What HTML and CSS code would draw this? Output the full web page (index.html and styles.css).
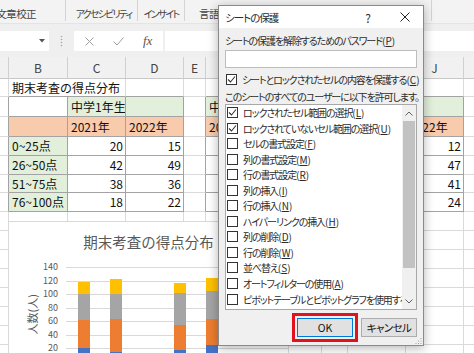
FILE: index.html
```html
<!DOCTYPE html>
<html lang="ja">
<head>
    <meta charset="UTF-8">
    <meta name="viewport" content="width=device-width, initial-scale=1.0">
    <title>シートの保護</title>
    <link rel="stylesheet" href="styles.css">
</head>
<body>

    <div class="ribbon">
        <div class="group g1"><span>文章校正</span></div>
        <div class="group g2"><span>アクセシビリティ</span></div>
        <div class="group g3"><span>インサイト</span></div>
        <div class="group g4"><span>言語</span></div>
        <div class="group g5"></div>
    </div>

    <div class="fbar">
        <div class="namebox">
            <svg width="6" height="4" viewBox="0 0 6 4"><polygon points="0,0 6,0 3,3.5" fill="#555"/></svg>
        </div>
        <div class="grip">
            <svg width="3" height="13" viewBox="0 0 3 13"><circle cx="1.5" cy="1.5" r="0.8" fill="#a8a8a8"/><circle cx="1.5" cy="4.5" r="0.8" fill="#a8a8a8"/><circle cx="1.5" cy="7.5" r="0.8" fill="#a8a8a8"/><circle cx="1.5" cy="10.5" r="0.8" fill="#a8a8a8"/></svg>
        </div>
        <div class="fbtns">
            <svg class="fx-cancel" width="9" height="9" viewBox="0 0 9 9"><path d="M0.5 0.5L8.5 8.5M8.5 0.5L0.5 8.5" stroke="#9c9c9c" stroke-width="1"/></svg>
            <svg class="fx-enter" width="11" height="9" viewBox="0 0 11 9"><path d="M0.5 4.5L4 8L10.5 0.5" stroke="#9c9c9c" stroke-width="1" fill="none"/></svg>
            <span class="fx">fx</span>
        </div>
        <div class="finput"></div>
    </div>

    <div class="sheet">
        <div class="row hd">
            <div>A</div><div>B</div><div>C</div><div>D</div><div>E</div><div>F</div><div>G</div><div>H</div><div>I</div><div>J</div><div>K</div>
        </div>
        <div class="row r1">
            <div></div><div class="tt wide">期末考査の得点分布</div><div class="tt"></div><div></div><div class="tt"></div><div class="tt"></div><div></div><div class="tt"></div><div class="tt"></div><div></div>
        </div>
        <div class="row r2">
            <div class="tl"></div><div class="t"></div><div class="t g">中学1年生</div><div class="t g"></div><div class="tl"></div><div class="t g">中学2年生</div><div class="t g"></div><div class="tl"></div><div class="t g">中学3年生</div><div class="t g"></div><div></div>
        </div>
        <div class="row r3">
            <div class="tl"></div><div class="t o"></div><div class="t o">2021年</div><div class="t o">2022年</div><div class="tl"></div><div class="t o">2021年</div><div class="t o">2022年</div><div class="tl"></div><div class="t o">2021年</div><div class="t o">2022年</div><div></div>
        </div>
        <div class="row r4">
            <div class="tl"></div><div class="t g">0~25点</div><div class="t n">20</div><div class="t n">15</div><div class="tl"></div><div class="t n">18</div><div class="t n">25</div><div class="tl"></div><div class="t n">16</div><div class="t n">12</div><div></div>
        </div>
        <div class="row r5">
            <div class="tl"></div><div class="t g">26~50点</div><div class="t n">42</div><div class="t n">49</div><div class="tl"></div><div class="t n">36</div><div class="t n">39</div><div class="tl"></div><div class="t n">44</div><div class="t n">47</div><div></div>
        </div>
        <div class="row r6">
            <div class="tl"></div><div class="t g">51~75点</div><div class="t n">38</div><div class="t n">36</div><div class="tl"></div><div class="t n">48</div><div class="t n">40</div><div class="tl"></div><div class="t n">39</div><div class="t n">41</div><div></div>
        </div>
        <div class="row r7">
            <div class="tl"></div><div class="t g">76~100点</div><div class="t n">18</div><div class="t n">22</div><div class="tl"></div><div class="t n">15</div><div class="t n">20</div><div class="tl"></div><div class="t n">21</div><div class="t n">24</div><div></div>
        </div>
        <div class="row"><div></div><div></div><div></div><div></div><div></div><div></div><div></div><div></div><div></div><div></div><div></div></div>
        <div class="row"><div></div><div></div><div></div><div></div><div></div><div></div><div></div><div></div><div></div><div></div><div></div></div>
        <div class="row"><div></div><div></div><div></div><div></div><div></div><div></div><div></div><div></div><div></div><div></div><div></div></div>
        <div class="row"><div></div><div></div><div></div><div></div><div></div><div></div><div></div><div></div><div></div><div></div><div></div></div>
        <div class="row"><div></div><div></div><div></div><div></div><div></div><div></div><div></div><div></div><div></div><div></div><div></div></div>
        <div class="row"><div></div><div></div><div></div><div></div><div></div><div></div><div></div><div></div><div></div><div></div><div></div></div>
        <div class="row"><div></div><div></div><div></div><div></div><div></div><div></div><div></div><div></div><div></div><div></div><div></div></div>
        <div class="row"><div></div><div></div><div></div><div></div><div></div><div></div><div></div><div></div><div></div><div></div><div></div></div>
    </div>

    <!-- グラフ -->
    <div class="chart">
        <div class="ctitle">期末考査の得点分布</div>
        <div class="cbody">
            <div class="atitle"><span>人数(人)</span></div>
            <div class="area">
                <div class="scale">
                    <div class="tick"><span>140</span></div>
                    <div class="tick"><span>120</span></div>
                    <div class="tick"><span>100</span></div>
                    <div class="tick"><span>80</span></div>
                    <div class="tick"><span>60</span></div>
                    <div class="tick"><span>40</span></div>
                    <div class="tick"><span>20</span></div>
                    <div class="tick"><span>0</span></div>
                </div>
                <div class="bars">
                    <div class="cat"><div class="bar"><i class="s1" style="height:13.57px"></i><i class="s2" style="height:28.5px"></i><i class="s3" style="height:25.79px"></i><i class="s4" style="height:12.21px"></i></div></div>
                    <div class="cat"><div class="bar"><i class="s1" style="height:10.18px"></i><i class="s2" style="height:33.25px"></i><i class="s3" style="height:24.43px"></i><i class="s4" style="height:14.93px"></i></div></div>
                    <div class="cat"></div>
                    <div class="cat"><div class="bar"><i class="s1" style="height:12.21px"></i><i class="s2" style="height:24.43px"></i><i class="s3" style="height:32.57px"></i><i class="s4" style="height:10.18px"></i></div></div>
                    <div class="cat"><div class="bar"><i class="s1" style="height:16.96px"></i><i class="s2" style="height:26.46px"></i><i class="s3" style="height:27.14px"></i><i class="s4" style="height:13.57px"></i></div></div>
                </div>
            </div>
        </div>
    </div>

    <!-- シートの保護ダイアログ -->
    <div class="dialog">
        <div class="dtitle">
            <span class="dname">シートの保護</span>
            <span class="help">?</span>
            <span class="close"><svg width="10" height="10" viewBox="0 0 10 10"><path d="M0.5 0.5L9.5 9.5M9.5 0.5L0.5 9.5" stroke="#222" stroke-width="1"/></svg></span>
        </div>
        <div class="dbody">
            <p class="lbl">シートの保護を解除するためのパスワード<span class="ak">(<u>P</u>)</span></p>
            <div class="pwd"></div>
            <div class="chk"><span class="cb"><svg width="9" height="9" viewBox="0 0 9 9"><path d="M1 4.5L3.5 7L8 1.5" stroke="#333" stroke-width="1.1" fill="none"/></svg></span>シートとロックされたセルの内容を保護する<span class="ak">(<u>C</u>)</span></div>
            <p class="lbl note">このシートのすべてのユーザーに以下を許可します。</p>
            <div class="list">
                <ul class="items">
                    <li><span class="cb"><svg width="9" height="9" viewBox="0 0 9 9"><path d="M1 4.5L3.5 7L8 1.5" stroke="#333" stroke-width="1.1" fill="none"/></svg></span>ロックされたセル範囲の選択<span class="ak">(<u>L</u>)</span></li>
                    <li><span class="cb"><svg width="9" height="9" viewBox="0 0 9 9"><path d="M1 4.5L3.5 7L8 1.5" stroke="#333" stroke-width="1.1" fill="none"/></svg></span>ロックされていないセル範囲の選択<span class="ak">(<u>U</u>)</span></li>
                    <li><span class="cb"></span>セルの書式設定<span class="ak">(<u>F</u>)</span></li>
                    <li><span class="cb"></span>列の書式設定<span class="ak">(<u>M</u>)</span></li>
                    <li><span class="cb"></span>行の書式設定<span class="ak">(<u>R</u>)</span></li>
                    <li><span class="cb"></span>列の挿入<span class="ak">(<u>I</u>)</span></li>
                    <li><span class="cb"></span>行の挿入<span class="ak">(<u>N</u>)</span></li>
                    <li><span class="cb"></span>ハイパーリンクの挿入<span class="ak">(<u>H</u>)</span></li>
                    <li><span class="cb"></span>列の削除<span class="ak">(<u>D</u>)</span></li>
                    <li><span class="cb"></span>行の削除<span class="ak">(<u>W</u>)</span></li>
                    <li><span class="cb"></span>並べ替え<span class="ak">(<u>S</u>)</span></li>
                    <li><span class="cb"></span>オートフィルターの使用<span class="ak">(<u>A</u>)</span></li>
                    <li class="multi"><span class="cb"></span><span>ピボットテーブルとピボットグラフを使用する<br><span class="ak">(<u>P</u>)</span></span></li>
                </ul>
                <div class="vscroll">
                    <div class="arrow"><svg width="8" height="5" viewBox="0 0 8 5"><path d="M0.5 4.5L4 1L7.5 4.5" stroke="#606060" fill="none"/></svg></div>
                    <div class="thumb"></div>
                    <div class="arrow down"><svg width="8" height="5" viewBox="0 0 8 5"><path d="M0.5 0.5L4 4L7.5 0.5" stroke="#606060" fill="none"/></svg></div>
                </div>
            </div>
            <div class="btns">
                <div class="hl"><button class="btn def">OK</button></div>
                <button class="btn">キャンセル</button>
            </div>
        </div>
        <svg class="sizer" width="7" height="7" viewBox="0 0 7 7"><circle cx="6" cy="1.5" r="0.6" fill="#999"/><circle cx="3.5" cy="4" r="0.6" fill="#999"/><circle cx="6" cy="4" r="0.6" fill="#999"/><circle cx="1" cy="6.5" r="0.6" fill="#999"/><circle cx="3.5" cy="6.5" r="0.6" fill="#999"/><circle cx="6" cy="6.5" r="0.6" fill="#999"/></svg>
    </div>

</body>
</html>
```

FILE: styles.css
```css
* {
    margin: 0;
    padding: 0;
    box-sizing: border-box;
}

html, body {
    width: 474px;
    height: 353px;
    overflow: hidden;
}

body {
    font-family: "Noto Sans CJK JP", sans-serif;
    background-color: #fff;
    color: #222;
    position: relative;
}

/* リボン */
.ribbon {
    height: 24px;
    display: flex;
    background-color: #f3f3f3;
    border-bottom: 1px solid #e4e4e4;
    font-size: 10px;
    letter-spacing: -1.8px;
    color: #444;
    font-feature-settings: "palt";
    white-space: nowrap;
}

.group {
    height: 21px;
    padding-top: 7px;
    line-height: 14px;
    border-right: 1px solid #d4d4d4;
    text-align: center;
    flex-shrink: 0;
    overflow: hidden;
}

.g1 { width: 102px; margin-left: -36px; padding-right: 29px; text-align: right; font-size: 10.5px; letter-spacing: -0.6px; }
.g2 { width: 72px; padding-left: 4px; }
.g3 { width: 47px; }
.g4 { width: 247px; text-align: left; padding-left: 14px; font-size: 10.5px; letter-spacing: -0.6px; }
.g5 { width: 60px; border-right: none; }

/* 数式バー */
.fbar {
    height: 33px;
    display: flex;
    align-items: flex-start;
    padding-top: 7px;
    background-color: #efefef;
}

.namebox {
    width: 49px;
    height: 20px;
    background-color: #fff;
    display: flex;
    align-items: center;
    justify-content: flex-end;
    padding-right: 4px;
}

.grip {
    width: 25px;
    height: 20px;
    display: flex;
    align-items: center;
    justify-content: center;
}

.fbtns {
    width: 89px;
    height: 20px;
    background-color: #fff;
    display: flex;
    align-items: center;
    padding-left: 11px;
}

.fx-enter { margin-left: 19px; }

.fx {
    margin-left: 19px;
    font-family: "Liberation Serif", serif;
    font-style: italic;
    font-size: 13px;
    color: #555;
}

.finput {
    flex: 1;
    height: 20px;
    margin-left: 2px;
    background-color: #fff;
}

/* シート */
.sheet {
    margin-left: -41px;
    font-size: 12px;
    color: #111;
}

.row {
    display: grid;
    grid-template-columns: 50px 59px 58px 58px 22px 58px 58px 26px 58px 58px 58px;
    height: 19px;
    line-height: 18px;
    white-space: nowrap;
}

.row > div {
    border-right: 1px solid #dadada;
    border-bottom: 1px solid #dadada;
    padding: 0 3px;
    overflow: hidden;
}

.row.hd {
    height: 22px;
    line-height: 21px;
    background-color: #f1f1f1;
    color: #444;
}

.row.hd > div {
    text-align: center;
    border-right-color: #d0d0d0;
    border-bottom-color: #c8c8c8;
}

.r1 { height: 18px; line-height: 17px; }
.r2, .r3 { height: 20px; line-height: 19px; }
.r6 { height: 18px; line-height: 17px; }

.r1 .wide { grid-column: span 2; overflow: visible; }

.row > .t { border-right-color: #a3a3a3; border-bottom-color: #a3a3a3; }
.row > .tt { border-bottom-color: #a3a3a3; }
.row > .tl { border-right-color: #a3a3a3; }

.row > .g { background-color: #e2efda; }
.row > .o { background-color: #f8cbad; }
.row > .n { text-align: right; padding-right: 2px; }

/* グラフ */
.chart {
    position: absolute;
    left: 8px;
    top: 221px;
    width: 281px;
    height: 150px;
    background-color: #fff;
    border: 1px solid #d9d9d9;
    color: #595959;
}

.ctitle {
    padding-top: 10px;
    line-height: 20px;
    font-size: 14.5px;
    text-align: center;
}

.cbody {
    margin-top: 15px;
    display: flex;
    padding-left: 13px;
}

.atitle {
    width: 20px;
    height: 95px;
    display: flex;
    align-items: center;
    justify-content: center;
    font-size: 11px;
}

.atitle span {
    writing-mode: vertical-rl;
    text-orientation: sideways;
    transform: rotate(180deg);
}

.area {
    flex: 1;
    display: grid;
}

.scale, .bars {
    grid-area: 1 / 1;
}

.tick {
    height: 13.57px;
    display: flex;
    align-items: flex-start;
}

.tick span {
    width: 16px;
    margin-top: -6px;
    line-height: 12px;
    font-size: 9px;
    text-align: right;
    color: #595959;
}

.tick::after {
    content: "";
    flex: 1;
    height: 1px;
    margin-left: 8px;
    background-color: #d9d9d9;
}

.bars {
    height: 95px;
    padding-left: 26px;
    display: flex;
}

.cat {
    width: 32px;
    display: flex;
    justify-content: center;
    align-items: flex-end;
}

.bar {
    width: 12px;
    display: flex;
    flex-direction: column-reverse;
}

.bar i { display: block; }
.s1 { background-color: #4472c4; }
.s2 { background-color: #ed7d31; }
.s3 { background-color: #a5a5a5; }
.s4 { background-color: #ffc000; }

/* ダイアログ */
.dialog {
    position: absolute;
    left: 218px;
    top: 5px;
    width: 206px;
    height: 341px;
    background-color: #f0f0f0;
    border: 1px solid #8a8a8a;
    box-shadow: 0 2px 10px rgba(0, 0, 0, 0.3);
    font-size: 10px;
    letter-spacing: -1.1px;
    color: #2b2b2b;
    font-feature-settings: "palt";
    white-space: nowrap;
}

.ak { letter-spacing: 0; }

.dtitle {
    height: 22px;
    display: flex;
    align-items: center;
    background-color: #fff;
    padding-left: 6px;
}

.dname {
    font-size: 10.5px;
    letter-spacing: -1px;
}

.help {
    margin-left: auto;
    width: 38px;
    text-align: center;
    font-size: 12px;
    letter-spacing: 0;
}

.close {
    width: 36px;
    display: flex;
    justify-content: center;
}

.dbody {
    padding: 0 6px;
}

.lbl {
    margin-top: 5px;
    line-height: 16px;
}

.pwd {
    height: 18px;
    margin-top: 1px;
    background-color: #fff;
    border: 1px solid #bdbdbd;
}

.chk {
    margin-top: 3px;
    height: 16px;
    display: flex;
    align-items: center;
    padding-left: 1px;
}

.cb {
    width: 11px;
    height: 11px;
    flex-shrink: 0;
    margin-right: 5px;
    border: 1px solid #333;
    background-color: #fff;
    display: flex;
    align-items: center;
    justify-content: center;
}

.note {
    margin-top: 3px;
    line-height: 14px;
}

.list {
    height: 206px;
    display: flex;
    background-color: #fff;
    border: 1px solid #a8a8a8;
}

.items {
    flex: 1;
    list-style: none;
    overflow: hidden;
    padding-left: 1px;
}

.items li {
    height: 15.5px;
    line-height: 15.5px;
    display: flex;
    align-items: center;
}

.items li.multi {
    height: auto;
    align-items: flex-start;
    line-height: 13px;
    padding-top: 1.5px;
}

.items li.multi .cb { margin-top: 1px; }

.vscroll {
    width: 14px;
    display: flex;
    flex-direction: column;
    background-color: #f0f0f0;
}

.arrow {
    height: 16px;
    display: flex;
    align-items: center;
    justify-content: center;
}

.thumb {
    height: 147px;
    margin: 0 1px;
    background-color: #c2c2c2;
}

.arrow.down { margin-top: auto; }

.btns {
    margin-top: 3px;
    display: flex;
    justify-content: flex-end;
    align-items: center;
    gap: 3px;
}

.hl {
    border: 3px solid #e3101d;
    padding: 2px;
}

.btn {
    width: 56px;
    height: 19px;
    display: block;
    font-family: inherit;
    font-size: 10.5px;
    letter-spacing: -0.6px;
    font-feature-settings: "palt";
    color: #111;
    background-color: #e1e1e1;
    border: 1px solid #adadad;
}

.btn.def {
    border-color: #0078d7;
    letter-spacing: 0;
}

.sizer {
    position: absolute;
    right: 1px;
    bottom: 1px;
}
```
